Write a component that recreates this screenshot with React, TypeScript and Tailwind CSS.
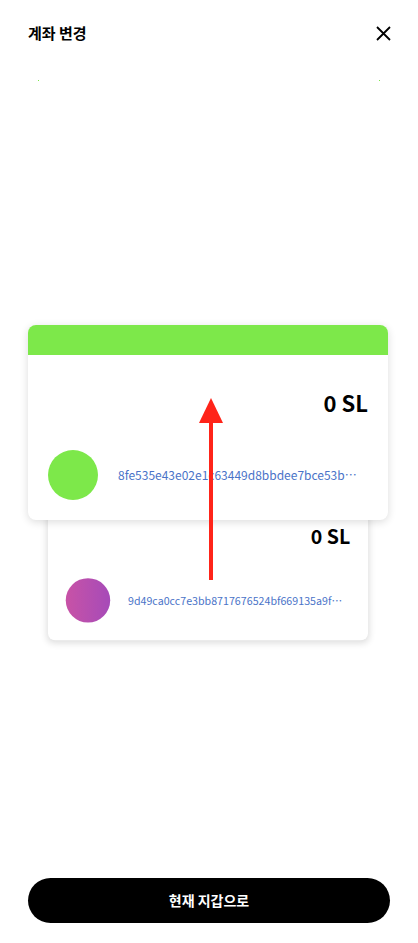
const font = { fontFamily: '"Noto Sans CJK KR", "Noto Sans", sans-serif' };

interface CardProps {
  amount: string;
  address: string;
  circle: string;
}

const WalletCard = ({ amount, address, circle }: CardProps) => {
  return (
    <div className="w-[360px] h-[195px] rounded-lg bg-white overflow-hidden shadow-[0_2px_8px_rgba(0,0,0,0.14)]">
      <div className="h-[30px] bg-[#7de84a]" />
      <div className="px-5">
        <div className="mt-[33px] h-[28px] text-right text-[22px] leading-[28px] font-bold text-black">
          {amount}
        </div>
        <div className="mt-[34px] flex items-center gap-5">
          <div className={`w-[50px] h-[50px] rounded-full flex-shrink-0 ${circle}`} />
          <div className="flex-1 min-w-0 pr-[6px] truncate text-[12px] text-[#4a73c8]">{address}</div>
        </div>
      </div>
    </div>
  );
};

export default function App() {
  return (
    <div className="relative w-[418px] h-[943px] bg-white flex flex-col" style={font}>
      {/* Header */}
      <div className="h-[66px] px-7 flex items-center justify-between flex-shrink-0">
        <h1 className="text-[15px] font-bold text-black">계좌 변경</h1>
        <button className="w-[16px] h-[16px] flex items-center justify-center -mr-[1px]">
          <svg width="15" height="15" viewBox="0 0 15 15">
            <path d="M1 1 L14 14 M14 1 L1 14" stroke="#000" strokeWidth="1.8" />
          </svg>
        </button>
      </div>

      {/* stray corner dots */}
      <span className="absolute left-[38px] top-[80px] w-px h-px bg-[#7de84a]" />
      <span className="absolute left-[379px] top-[80px] w-px h-px bg-[#7de84a]" />

      {/* Card stack */}
      <div className="flex-1 flex flex-col items-start pl-7">
        <div className="relative mt-[259px] w-[360px]">
          <div className="absolute left-0 top-[142px] scale-[0.889] origin-top">
            <WalletCard
              amount="0 SL"
              address="9d49ca0cc7e3bb8717676524bf669135a9f0c3e21b7d"
              circle="bg-gradient-to-r from-[#c852a6] to-[#a64ab8]"
            />
          </div>
          <div className="relative">
            <WalletCard
              amount="0 SL"
              address="8fe535e43e02e1c63449d8bbdee7bce53b8a1c07d2f4"
              circle="bg-[#7de84a]"
            />
          </div>
        </div>
      </div>

      {/* Arrow overlay */}
      <svg className="absolute left-[195px] top-[396px]" width="32" height="186" viewBox="0 0 32 186">
        <path d="M16 2 L28 27 L4 27 Z" fill="#ff2419" />
        <rect x="14" y="25" width="4" height="159" fill="#ff2419" />
      </svg>

      {/* Bottom button */}
      <div className="px-7 pb-5 flex-shrink-0">
        <button className="w-full h-[45px] rounded-full bg-black text-white text-[14px] font-bold">
          현재 지갑으로
        </button>
      </div>
    </div>
  );
}
